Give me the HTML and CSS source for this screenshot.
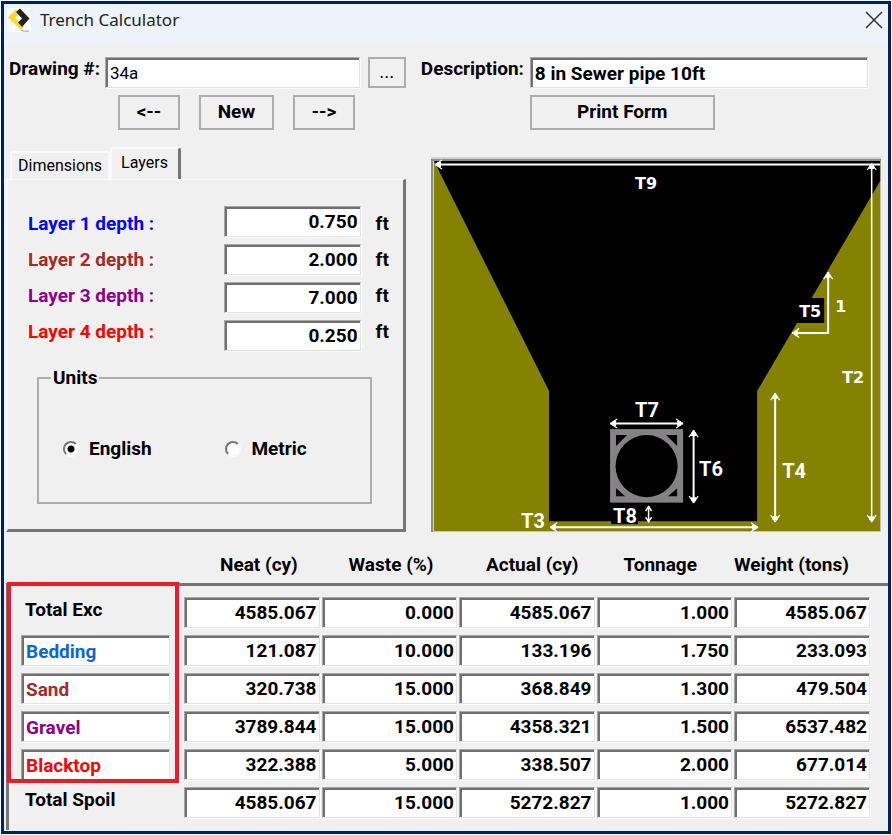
FILE: index.html
```html
<!DOCTYPE html>
<html lang="en">
<head>
<meta charset="utf-8">
<title>Trench Calculator</title>
<link rel="stylesheet" href="styles.css">
</head>
<body>
<main class="window">
  <header class="titlebar">
    <svg class="app-icon" viewBox="0 0 24 24" aria-hidden="true">
      <rect width="24" height="24" fill="#fdfdfd"/>
      <path d="M9 1 L1 9.500 L14 22 L17 18 L8.500 10 L12.500 6 Z" fill="#fbd936"/>
      <path d="M9 4 L13 .500 L22.500 10.500 L15 19 L11 14.500 L15 10.500 Z" fill="#222"/>
      <path d="M14 22 Q17 24 22 23" stroke="#999" fill="none"/>
    </svg>
    <h1 class="title">Trench Calculator</h1>
    <button class="close" type="button" aria-label="Close">
      <svg viewBox="0 0 18 18" aria-hidden="true"><path d="M1 1 L17 17 M17 1 L1 17" stroke="#333" stroke-width="1.500" fill="none"/></svg>
    </button>
  </header>

  <form class="content">
    <div class="halves head">
      <div class="group">
        <div class="line">
          <label class="head-label" for="drawing">Drawing #:</label>
          <input class="field light" id="drawing" value="34a">
          <button class="btn dots" type="button">...</button>
        </div>
        <div class="line nav">
          <button class="btn arrow" type="button">&lt;--</button>
          <button class="btn new" type="button">New</button>
          <button class="btn arrow" type="button">--&gt;</button>
        </div>
      </div>
      <div class="group right">
        <div class="line">
          <label class="desc-label" for="desc">Description:</label>
          <input class="field" id="desc" value="8 in Sewer pipe 10ft">
        </div>
        <div class="line print-line">
          <button class="btn print" type="button">Print Form</button>
        </div>
      </div>
    </div>

    <div class="halves middle">
      <section class="tabs">
        <div class="tablist" role="tablist">
          <button class="tab" type="button" role="tab" aria-selected="false">Dimensions</button>
          <button class="tab active" type="button" role="tab" aria-selected="true">Layers</button>
        </div>
        <div class="panel" role="tabpanel">
          <div class="layers">
            <div class="names">
              <label class="blue" for="l1">Layer 1 depth :</label>
              <label class="brown" for="l2">Layer 2 depth :</label>
              <label class="purple" for="l3">Layer 3 depth :</label>
              <label class="red" for="l4">Layer 4 depth :</label>
            </div>
            <div class="depths">
              <input class="field num" id="l1" value="0.750">
              <input class="field num" id="l2" value="2.000">
              <input class="field num" id="l3" value="7.000">
              <input class="field num" id="l4" value="0.250">
            </div>
            <div class="names"><span>ft</span><span>ft</span><span>ft</span><span>ft</span></div>
          </div>
          <fieldset class="units">
            <legend>Units</legend>
            <label class="choice"><input class="radio" type="radio" name="units" checked>English</label>
            <label class="choice"><input class="radio" type="radio" name="units">Metric</label>
          </fieldset>
        </div>
      </section>

      <div class="diagram">
        <svg viewBox="431 157 450 375" role="img" aria-label="Trench cross section">
          <defs>
            <marker id="tip" viewBox="0 0 12 12" refX="11" refY="6" markerWidth="12" markerHeight="12" markerUnits="userSpaceOnUse" orient="auto-start-reverse">
              <path d="M11 6 L8 3.500 H5 V8.500 H8 Z" fill="#fff"/>
              <path d="M9 5 L4 1.500 M9 7 L4 10.500" stroke="#fff" fill="none" stroke-width="1.200"/>
            </marker>
            <marker id="small-tip" viewBox="0 0 8 8" refX="7" refY="4" markerWidth="8" markerHeight="8" markerUnits="userSpaceOnUse" orient="auto-start-reverse">
              <path d="M2 1 L6.500 4 L2 7" stroke="#fff" fill="none" stroke-width="1.500"/>
            </marker>
          </defs>
          <rect x="431" y="157" width="450" height="375" fill="#d4d2ca"/>
          <path d="M432 532 V160 H881" stroke="#8c8c8c" stroke-width="2" fill="none"/>
          <rect x="434" y="161" width="446" height="370" fill="#848200"/>
          <path d="M434 161 L549 391 V521 H757 V391 L880 181 V161 Z" fill="#000"/>
          <path d="M812 298 H824 V323 H797 L790 318 L798 298 Z" fill="#000"/>
          <rect x="611" y="506" width="27" height="18" fill="#000"/>
          <rect x="610" y="429" width="73" height="73.500" fill="#848284"/>
          <path d="M616 435 H627 L616 446 Z M677 435 V446 L666 435 Z M616 496 V488 L625 496 Z M677 496 H668 L677 488 Z" fill="#000"/>
          <circle cx="646.500" cy="466" r="31" fill="#000"/>
          <g stroke="#fff" stroke-width="2" fill="none">
            <path d="M435 164.500 H880" marker-start="url(#tip)"/>
            <path d="M871.500 163 V522" marker-start="url(#tip)" marker-end="url(#tip)" stroke-width="1.500"/>
            <path d="M828 272 V333 H792" marker-start="url(#tip)" marker-end="url(#tip)"/>
            <path d="M550 527 H758" marker-start="url(#tip)" marker-end="url(#tip)"/>
            <path d="M775 393 V522" marker-start="url(#tip)" marker-end="url(#tip)"/>
            <path d="M610 423.500 H683" marker-start="url(#tip)" marker-end="url(#tip)"/>
            <path d="M693.500 430 V503" marker-start="url(#tip)" marker-end="url(#tip)"/>
            <path d="M648.500 506 V522" marker-start="url(#small-tip)" marker-end="url(#small-tip)" stroke-width="1.500"/>
          </g>
          <g class="wide-marks">
            <text x="635" y="189">T9</text>
            <text x="799" y="317">T5</text>
            <text x="835" y="312">1</text>
            <text x="842" y="383">T2</text>
          </g>
          <g class="marks">
            <text x="635" y="417">T7</text>
            <text x="699" y="476">T6</text>
            <text x="782" y="478">T4</text>
            <text x="521" y="528">T3</text>
            <text x="613" y="523">T8</text>
          </g>
        </svg>
      </div>
    </div>

    <div class="results">
      <table>
        <colgroup><col class="col-name"><col><col><col><col><col class="col-last"></colgroup>
        <thead>
          <tr><th></th><th class="first">Neat (cy)</th><th>Waste (%)</th><th>Actual (cy)</th><th>Tonnage</th><th class="last">Weight (tons)</th></tr>
        </thead>
        <tbody>
          <tr>
            <th scope="row"><span class="total">Total Exc</span></th>
            <td><input class="field num" aria-label="Total Exc neat" value="4585.067"></td>
            <td><input class="field num" aria-label="Total Exc waste" value="0.000"></td>
            <td><input class="field num" aria-label="Total Exc actual" value="4585.067"></td>
            <td><input class="field num" aria-label="Total Exc tonnage" value="1.000"></td>
            <td><input class="field num" aria-label="Total Exc weight" value="4585.067"></td>
          </tr>
          <tr>
            <th scope="row"><input class="field sky" aria-label="Layer 1 name" value="Bedding"></th>
            <td><input class="field num" aria-label="Bedding neat" value="121.087"></td>
            <td><input class="field num" aria-label="Bedding waste" value="10.000"></td>
            <td><input class="field num" aria-label="Bedding actual" value="133.196"></td>
            <td><input class="field num" aria-label="Bedding tonnage" value="1.750"></td>
            <td><input class="field num" aria-label="Bedding weight" value="233.093"></td>
          </tr>
          <tr>
            <th scope="row"><input class="field brown" aria-label="Layer 2 name" value="Sand"></th>
            <td><input class="field num" aria-label="Sand neat" value="320.738"></td>
            <td><input class="field num" aria-label="Sand waste" value="15.000"></td>
            <td><input class="field num" aria-label="Sand actual" value="368.849"></td>
            <td><input class="field num" aria-label="Sand tonnage" value="1.300"></td>
            <td><input class="field num" aria-label="Sand weight" value="479.504"></td>
          </tr>
          <tr>
            <th scope="row"><input class="field purple" aria-label="Layer 3 name" value="Gravel"></th>
            <td><input class="field num" aria-label="Gravel neat" value="3789.844"></td>
            <td><input class="field num" aria-label="Gravel waste" value="15.000"></td>
            <td><input class="field num" aria-label="Gravel actual" value="4358.321"></td>
            <td><input class="field num" aria-label="Gravel tonnage" value="1.500"></td>
            <td><input class="field num" aria-label="Gravel weight" value="6537.482"></td>
          </tr>
          <tr>
            <th scope="row"><input class="field red" aria-label="Layer 4 name" value="Blacktop"></th>
            <td><input class="field num" aria-label="Blacktop neat" value="322.388"></td>
            <td><input class="field num" aria-label="Blacktop waste" value="5.000"></td>
            <td><input class="field num" aria-label="Blacktop actual" value="338.507"></td>
            <td><input class="field num" aria-label="Blacktop tonnage" value="2.000"></td>
            <td><input class="field num" aria-label="Blacktop weight" value="677.014"></td>
          </tr>
          <tr>
            <th scope="row"><span class="total">Total Spoil</span></th>
            <td><input class="field num" aria-label="Total Spoil neat" value="4585.067"></td>
            <td><input class="field num" aria-label="Total Spoil waste" value="15.000"></td>
            <td><input class="field num" aria-label="Total Spoil actual" value="5272.827"></td>
            <td><input class="field num" aria-label="Total Spoil tonnage" value="1.000"></td>
            <td><input class="field num" aria-label="Total Spoil weight" value="5272.827"></td>
          </tr>
        </tbody>
      </table>
      <div class="highlight"></div>
    </div>
  </form>
</main>
</body>
</html>
```
FILE: styles.css
```css
* {
  box-sizing: border-box;
}

body {
  margin: 0;
  padding: 1px;
  background: #fff;
  color: #000;
  font: bold 19px/24px Roboto, "Liberation Sans", sans-serif;
}

input,
button {
  font: inherit;
  color: inherit;
  margin: 0;
}

.window {
  display: flex;
  flex-direction: column;
  min-height: calc(100vh - 2px);
  border: 3px solid #00205f;
  background: #f0f0f0;
}

.titlebar {
  display: flex;
  align-items: center;
  height: 40px;
  padding: 0 5px 8px 3px;
  background: #eef3f9;
}

.app-icon {
  width: 24px;
  height: 24px;
}

.title {
  flex: 1;
  margin: 0 0 0 9px;
  font: 17px/24px "Noto Sans", "Open Sans", sans-serif;
  color: #222;
}

.close {
  width: 18px;
  height: 18px;
  padding: 0;
  border: 0;
  background: none;
}

.close svg {
  display: block;
}

.content {
  display: flex;
  flex-direction: column;
  flex: 1;
}

.halves {
  display: grid;
  grid-template-columns: minmax(0, 5fr) minmax(0, 6fr);
}

.head {
  padding-top: 13px;
}

.line {
  display: flex;
  height: 31px;
}

.group {
  padding-left: 5px;
}

.group.right {
  padding: 0 20px 0 15px;
}

.head-label {
  width: 96px;
}

.desc-label {
  width: 109px;
}

.field {
  display: block;
  flex: 1;
  width: 100%;
  min-width: 0;
  height: 31px;
  padding: 1px 1px 0 4px;
  border: 1px solid #e3e3e3;
  border-top-color: #a8a8a8;
  border-left-color: #a8a8a8;
  border-radius: 0;
  outline: 0;
  background: #fff;
  box-shadow: inset 2px 2px #707070, 1px 1px #fafafa;
}

.light {
  font-weight: 400;
  font-size: 17px;
}

.num {
  padding: 0 2px;
  text-align: right;
}

.btn {
  padding: 0 0 2px;
  border: 2px solid #adadad;
  background: #f0f0f0;
}

.dots {
  width: 38px;
  margin-left: 8px;
  font-weight: 400;
}

.nav,
.print-line {
  height: 35px;
  margin-top: 7px;
}

.nav {
  gap: 19px;
  padding-left: 109px;
}

.arrow {
  width: 62px;
}

.new {
  width: 75px;
}

.print-line {
  padding-left: 109px;
}

.print {
  width: 185px;
}

.middle {
  margin-top: 17px;
}

.tabs {
  display: flex;
  flex-direction: column;
  padding-left: 2px;
}

.tablist {
  display: flex;
  align-items: flex-end;
  height: 32px;
  padding-left: 4px;
}

.tab {
  height: 28px;
  padding: 0 6px;
  border: 2px solid #fafafa;
  border-bottom: 0;
  border-radius: 3px 3px 0 0;
  background: #f0f0f0;
  font-weight: 400;
  font-size: 16px;
}

.active {
  height: 32px;
  padding: 0 10px 2px 9px;
  border-right: 3px solid #767676;
}

.panel {
  flex: 1;
  padding: 26px 14px 24px 29px;
  border: 2px solid #fafafa;
  border-top-width: 1px;
  border-right: 3px solid #767676;
  border-bottom: 3px solid #767676;
}

.layers {
  display: flex;
}

.names {
  display: grid;
  grid-auto-rows: 36px;
  align-content: start;
  align-items: center;
}

.layers > .names:first-child {
  flex: 1;
  margin-left: -9px;
}

.depths {
  display: grid;
  gap: 7px;
  width: 137px;
  margin-right: 15px;
}

.units {
  display: flex;
  align-items: center;
  gap: 18px;
  height: 138px;
  margin: 15px 17px 0 0;
  padding: 5px 0 0 24px;
  border: 2px solid #adadad;
}

.units legend {
  margin-left: -12px;
  padding: 0 2px;
}

.choice {
  display: flex;
  align-items: center;
  flex: 1;
  gap: 10px;
}

.radio {
  appearance: none;
  width: 16px;
  height: 16px;
  border: 2px solid #fafafa;
  border-top-color: #767676;
  border-left-color: #767676;
  border-radius: 50%;
  background: #fff;
}

.radio:checked {
  background: radial-gradient(circle, #000 3px, #fff 4px);
}

.diagram {
  padding: 10px 7px 0 25px;
}

.diagram svg {
  display: block;
  width: 100%;
}

.wide-marks,
.marks {
  fill: #fff;
  font: bold 16px "DejaVu Sans", sans-serif;
}

.marks {
  font: bold 20px Roboto, sans-serif;
}

.results {
  position: relative;
  display: flex;
  flex: 1;
  align-items: flex-start;
  margin-left: 2px;
  padding-top: 18px;
}

table {
  width: 100%;
  table-layout: fixed;
  border-spacing: 0;
}

.col-name {
  width: 178px;
}

.col-last {
  width: 154px;
}

th,
td {
  padding: 0;
  text-align: left;
  vertical-align: top;
}

thead th {
  height: 36px;
  padding: 3px 0 0 27px;
  border-bottom: 3px solid #767676;
  white-space: nowrap;
}

thead .first {
  padding-left: 36px;
}

thead .last {
  padding-left: 0;
}

tbody th,
tbody td {
  height: 38px;
  padding: 0 2px 0 0;
}

tbody tr:first-child > * {
  height: 49px;
  padding-top: 11px;
}

tbody tr:last-child > * {
  height: 43px;
}

tbody th {
  padding-left: 12px;
  padding-right: 14px;
  border-left: 3px solid #767676;
}

tbody td:last-child {
  padding-right: 18px;
}

.total {
  display: block;
  padding: 1px 0 0 4px;
}

.highlight {
  position: absolute;
  top: 50px;
  left: 1px;
  width: 172px;
  height: 201px;
  border: 4px solid #ed1c24;
}

.blue {
  color: #00f;
}

.sky {
  color: #0c66d0;
}

.brown {
  color: #a52a2a;
}

.purple {
  color: #8b008b;
}

.red {
  color: #f00;
}
```
